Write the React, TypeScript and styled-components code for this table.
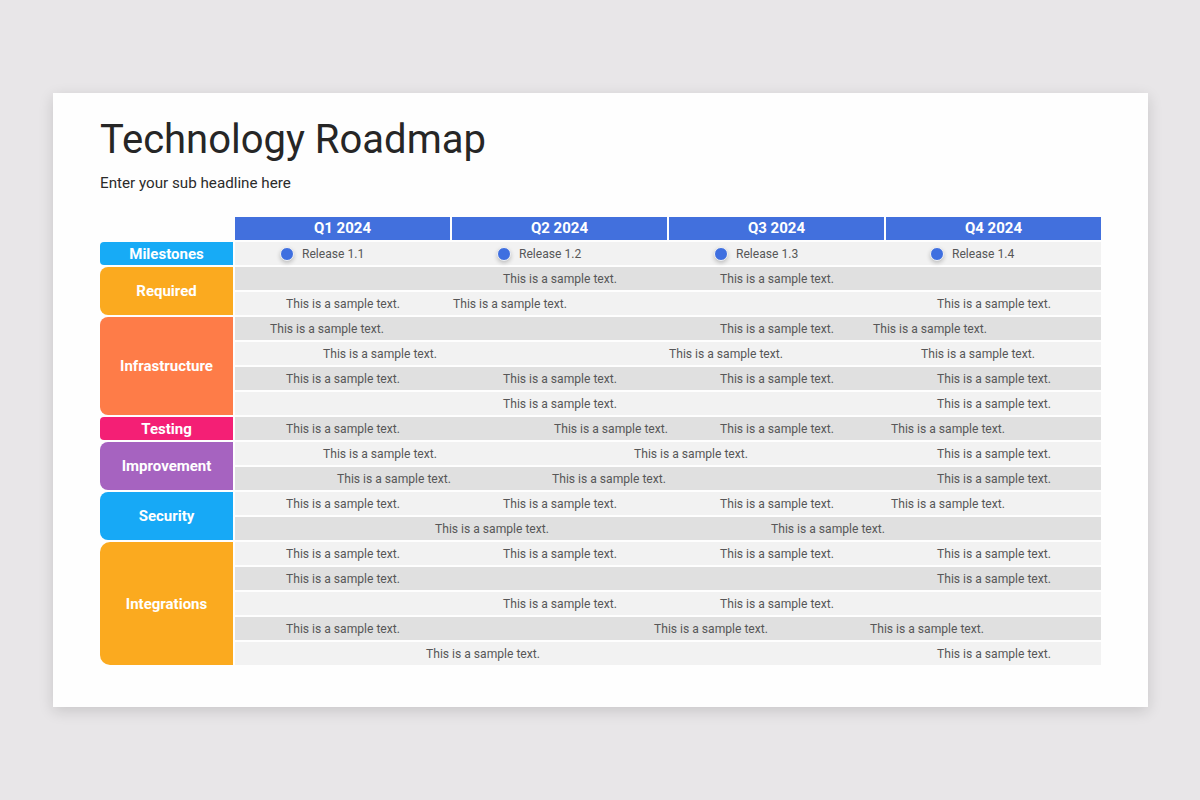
import styled, { createGlobalStyle } from 'styled-components';

const GlobalStyle = createGlobalStyle`
  html, body {
    margin: 0;
    padding: 0;
    background: #e8e6e8;
    font-family: Roboto, 'Liberation Sans', sans-serif;
  }
`;

const GRID_LEFT = 235;

type Group = {
  label: string;
  color: string;
  radius: number;
  rows: number[][];
};

const groups: Group[] = [
  {
    label: 'Required',
    color: '#fbaa1f',
    radius: 8,
    rows: [
      [503, 720],
      [286, 453, 937],
    ],
  },
  {
    label: 'Infrastructure',
    color: '#fe7c48',
    radius: 8,
    rows: [
      [270, 720, 873],
      [323, 669, 921],
      [286, 503, 720, 937],
      [503, 937],
    ],
  },
  {
    label: 'Testing',
    color: '#f41f75',
    radius: 4,
    rows: [[286, 554, 720, 891]],
  },
  {
    label: 'Improvement',
    color: '#a663c0',
    radius: 8,
    rows: [
      [323, 634, 937],
      [337, 552, 937],
    ],
  },
  {
    label: 'Security',
    color: '#17a9f6',
    radius: 8,
    rows: [
      [286, 503, 720, 891],
      [435, 771],
    ],
  },
  {
    label: 'Integrations',
    color: '#fbaa1f',
    radius: 10,
    rows: [
      [286, 503, 720, 937],
      [286, 937],
      [503, 720],
      [286, 654, 870],
      [426, 937],
    ],
  },
];

const quarters = ['Q1 2024', 'Q2 2024', 'Q3 2024', 'Q4 2024'];
const releases = [
  { x: 280, name: 'Release 1.1' },
  { x: 497, name: 'Release 1.2' },
  { x: 714, name: 'Release 1.3' },
  { x: 930, name: 'Release 1.4' },
];

const Page = styled.div`
  width: 1200px;
  height: 800px;
  padding-top: 93px;
  box-sizing: border-box;
`;

const Slide = styled.div`
  margin-left: 53px;
  width: 1095px;
  height: 614px;
  background: #fefefe;
  box-shadow: 0 4px 14px rgba(0, 0, 0, 0.14);
  box-sizing: border-box;
  padding: 22px 0 0 47px;
`;

const Title = styled.h1`
  margin: 0;
  font-size: 40px;
  font-weight: 400;
  line-height: 50px;
  color: #262626;
`;

const Subtitle = styled.p`
  margin: 8px 0 0;
  font-size: 15.2px;
  line-height: 20px;
  color: #2b2b2b;
`;

const Table = styled.div`
  margin-top: 24px;
  display: flex;
  flex-direction: column;
  gap: 2px;
  width: 1001px;
`;

const HeaderRow = styled.div`
  display: grid;
  grid-template-columns: repeat(4, 215px);
  gap: 2px;
  margin-left: 135px;
`;

const QuarterCell = styled.div`
  height: 23px;
  background: #4270dd;
  color: #fff;
  font-weight: 700;
  font-size: 15px;
  line-height: 23px;
  text-align: center;
`;

const GroupRow = styled.div`
  display: flex;
  gap: 2px;
`;

const Label = styled.div<{ $color: string; $radius: number }>`
  width: 133px;
  flex: none;
  background: ${(p) => p.$color};
  border-radius: ${(p) => `${p.$radius}px 0 0 ${p.$radius}px`};
  color: #fff;
  font-weight: 700;
  font-size: 15px;
  display: flex;
  align-items: center;
  justify-content: center;
`;

const Rows = styled.div`
  flex: 1;
  display: flex;
  flex-direction: column;
  gap: 2px;
`;

const Lane = styled.div<{ $dark: boolean }>`
  position: relative;
  height: 23px;
  background: ${(p) => (p.$dark ? '#e0e0e0' : '#f2f2f2')};
`;

const Item = styled.span<{ $x: number }>`
  position: absolute;
  top: 0;
  left: ${(p) => p.$x - GRID_LEFT}px;
  line-height: 24px;
  font-size: 12.1px;
  color: #575757;
  white-space: nowrap;
`;

const Milestone = styled.div<{ $x: number }>`
  position: absolute;
  top: 0;
  left: ${(p) => p.$x - GRID_LEFT}px;
  height: 23px;
  display: flex;
  align-items: center;
  gap: 8px;
  font-size: 12.1px;
  color: #575757;
  white-space: nowrap;
`;

const Dot = styled.span`
  width: 14px;
  height: 14px;
  border-radius: 50%;
  background: #3f6fe0;
  border: 1px solid #f4f4f4;
  box-sizing: border-box;
  box-shadow: 0 2px 4px rgba(0, 0, 0, 0.22);
`;

export default function App() {
  let index = 1;
  return (
    <Page>
      <GlobalStyle />
      <Slide>
        <Title>Technology Roadmap</Title>
        <Subtitle>Enter your sub headline here</Subtitle>
        <Table>
          <HeaderRow>
            {quarters.map((q) => (
              <QuarterCell key={q}>{q}</QuarterCell>
            ))}
          </HeaderRow>
          <GroupRow>
            <Label $color="#17abf6" $radius={4}>
              Milestones
            </Label>
            <Rows>
              <Lane $dark={false}>
                {releases.map((r) => (
                  <Milestone key={r.name} $x={r.x}>
                    <Dot />
                    {r.name}
                  </Milestone>
                ))}
              </Lane>
            </Rows>
          </GroupRow>
          {groups.map((g) => (
            <GroupRow key={g.label}>
              <Label $color={g.color} $radius={g.radius}>
                {g.label}
              </Label>
              <Rows>
                {g.rows.map((row, i) => {
                  const dark = index % 2 === 1;
                  index += 1;
                  return (
                    <Lane key={i} $dark={dark}>
                      {row.map((x) => (
                        <Item key={x} $x={x}>
                          This is a sample text.
                        </Item>
                      ))}
                    </Lane>
                  );
                })}
              </Rows>
            </GroupRow>
          ))}
        </Table>
      </Slide>
    </Page>
  );
}
